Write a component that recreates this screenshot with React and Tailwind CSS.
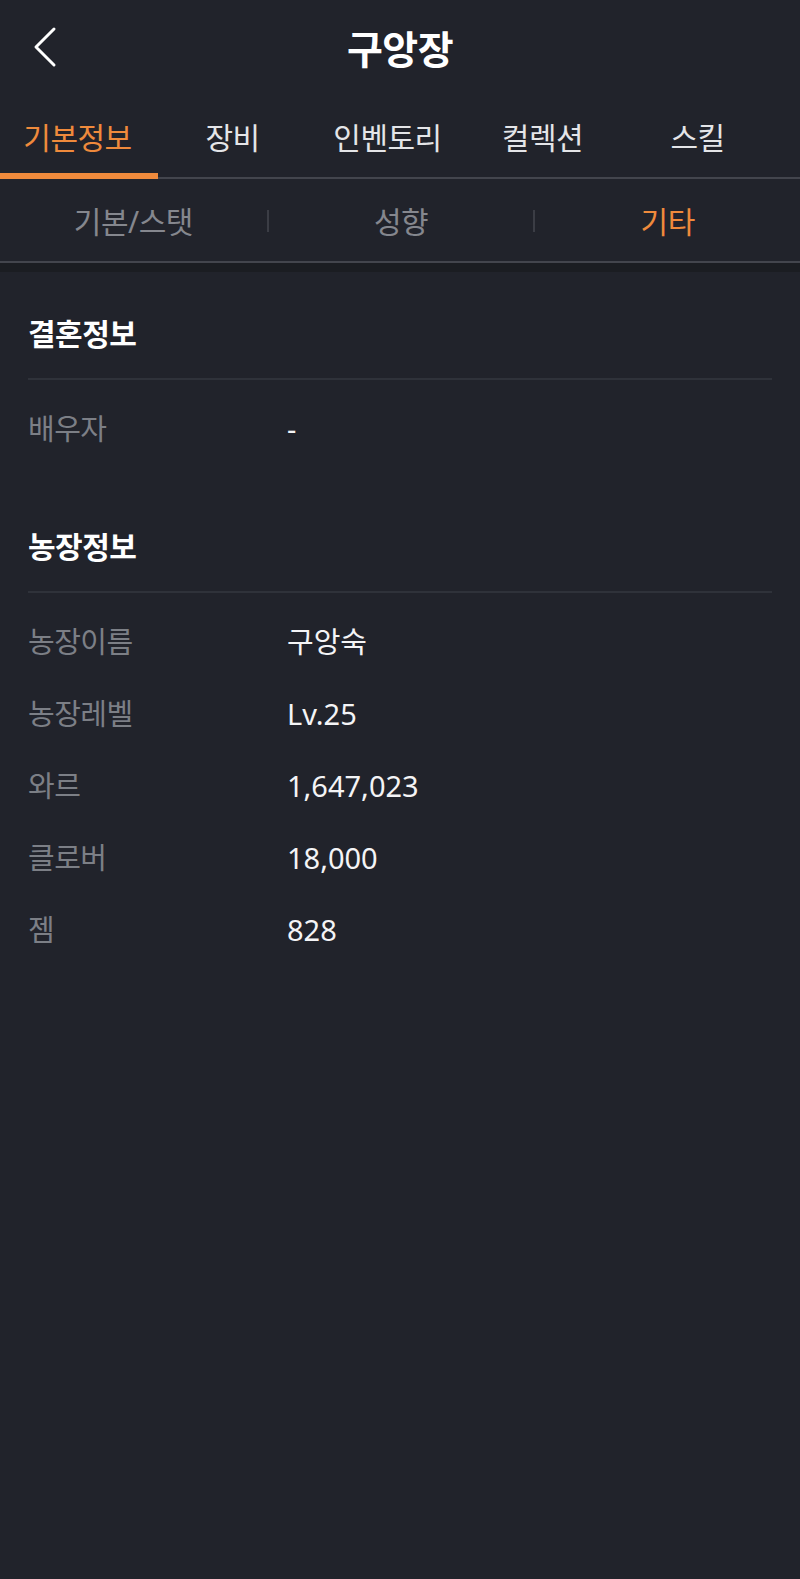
import React, { useState } from "react";

const mainTabs = ["기본정보", "장비", "인벤토리", "컬렉션", "스킬"];
const subTabs = ["기본/스탯", "성향", "기타"];

const sections = [
  {
    title: "결혼정보",
    top: "pt-[43px]",
    rows: [{ label: "배우자", value: "-" }],
  },
  {
    title: "농장정보",
    top: "pt-[65px]",
    rows: [
      { label: "농장이름", value: "구앙숙" },
      { label: "농장레벨", value: "Lv.25" },
      { label: "와르", value: "1,647,023" },
      { label: "클로버", value: "18,000" },
      { label: "젬", value: "828" },
    ],
  },
];

function BackIcon() {
  return (
    <svg width="30" height="42" viewBox="0 0 30 42" fill="none">
      <path
        d="M22 3 L4 21 L22 39"
        stroke="#ffffff"
        strokeWidth="3"
        strokeLinecap="round"
        strokeLinejoin="round"
      />
    </svg>
  );
}

export default function App() {
  const [tab, setTab] = useState(0);
  const [subTab, setSubTab] = useState(2);

  return (
    <div
      className="min-h-[1579px] w-[800px] bg-[#21232b] text-white"
      style={{ fontFamily: '"Noto Sans", "Noto Sans CJK KR", sans-serif' }}
    >
      {/* header */}
      <div className="relative flex h-[95px] items-center justify-center">
        <button className="absolute left-[32px] top-[26px]">
          <BackIcon />
        </button>
        <h1 className="pt-[2px] text-[39px] font-bold leading-none tracking-[-0.5px]">구앙장</h1>
      </div>

      {/* main tabs */}
      <div className="flex h-[84px] border-b-2 border-[#43454d]">
        {mainTabs.map((t, i) => (
          <button
            key={t}
            onClick={() => setTab(i)}
            className={
              "relative flex w-[155px] items-center justify-center pt-[2px] text-[30px] tracking-[-0.5px] " +
              (tab === i ? "text-[#ef8a3c]" : "text-[#e4e5e8]")
            }
          >
            {t}
            {tab === i && (
              <span className="absolute bottom-[-2px] left-0 h-[6px] w-[158px] bg-[#ef8a3c]" />
            )}
          </button>
        ))}
      </div>

      {/* sub tabs */}
      <div className="flex h-[84px] border-b-2 border-[#43454d]">
        {subTabs.map((t, i) => (
          <div key={t} className="flex flex-1 items-center">
            {i > 0 && <span className="mt-[2px] h-[22px] w-[2px] bg-[#3b3d45]" />}
            <button
              onClick={() => setSubTab(i)}
              className={
                "flex h-full flex-1 items-center justify-center pt-[2px] text-[30px] tracking-[-0.5px] " +
                (subTab === i ? "text-[#ef8a3c]" : "text-[#85878e]")
              }
            >
              {t}
            </button>
          </div>
        ))}
      </div>
      <div className="h-[9px] bg-[#1b1d22]" />

      {/* content */}
      <div className="px-[28px]">
        {sections.map((s) => (
          <div key={s.title} className={s.top}>
            <h2 className="border-b-2 border-[#2f323a] pb-[27px] pt-[2px] text-[30px] font-bold leading-[34px] tracking-[-0.5px]">
              {s.title}
            </h2>
            <div className="pt-[11px]">
              {s.rows.map((r) => (
                <div key={r.label} className="flex h-[72px] items-center pt-[4px] text-[29px]">
                  <span className="w-[259px] text-[#7c7f86] tracking-[-0.5px]">{r.label}</span>
                  <span className="text-[#f4f4f6]">{r.value}</span>
                </div>
              ))}
            </div>
          </div>
        ))}
      </div>
    </div>
  );
}
